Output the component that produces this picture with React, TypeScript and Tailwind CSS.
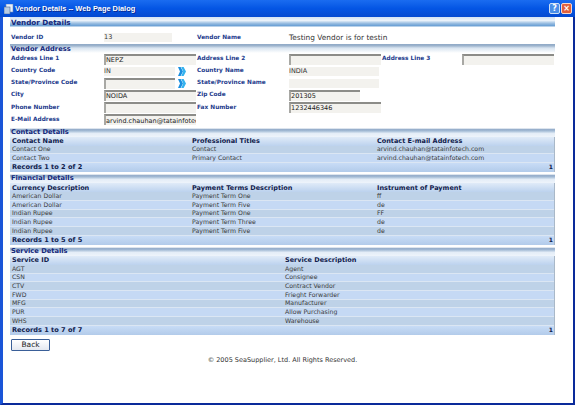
const font = { fontFamily: '"DejaVu Sans", Verdana, sans-serif' };

function SectionBar({ title, kind }: { title: string; kind: "main" | "plain" | "table" }) {
  if (kind === "main") {
    return (
      <div className="h-[10px] bg-[linear-gradient(to_bottom,#d3e2f3_0%,#eaf2fa_35%,#9dc0e2_62%,#6fa3d6_85%,#dce8f4_100%)] text-[7.2px] font-bold text-[#14277a] leading-[11px]">
        <span className="pl-[1px]">{title}</span>
      </div>
    );
  }
  return (
    <div
      className={`h-[9px] text-[6.7px] font-bold text-[#14277a] ${kind === "plain" ? "leading-[10px] bg-[linear-gradient(to_bottom,#8ea8c6_0%,#9db4cd_20%,#d8e4f0_45%,#ffffff_100%)]" : "leading-[9px] bg-[linear-gradient(to_bottom,#ffffff_0%,#90a9c8_18%,#a8bfd8_34%,#e4edf7_60%,#eef4fb_100%)]"}`}
    >
      <span className="pl-[1px]">{title}</span>
    </div>
  );
}

function Label({ text }: { text: string }) {
  return <div className="text-[5.8px] font-bold text-[#1c3a8c] leading-none pl-[1px]">{text}</div>;
}

function Input({ value, w }: { value?: string; w: string }) {
  return (
    <input
      readOnly
      value={value ?? ""}
      className={`h-[11px] bg-[#f3f2ee] border-t-2 border-l-2 border-t-[#8c8c88] border-l-[#a8a8a4] text-[6.5px] leading-[9px] text-[#222] outline-none px-0 ${w}`}
    />
  );
}

function Flat({ value, w }: { value?: string; w: string }) {
  return (
    <div className={`h-[9px] bg-[#f3f2ee] text-[6.5px] leading-[9px] text-[#333] ${w}`}>{value}</div>
  );
}

function Arrow() {
  return (
    <svg width="8" height="9" viewBox="0 0 8 9" className="ml-[3px]">
      <path d="M0 0 L2.6 0 L5 4.5 L2.6 9 L0 9 L2 4.5Z" fill="#1a8fe0" />
      <path d="M3.2 0 L5.6 0 L8 4.5 L5.6 9 L3.2 9 L5.2 4.5Z" fill="#34b2ee" />
    </svg>
  );
}

function DataTable({
  columns,
  rows,
  total,
}: {
  columns: { name: string; width: string }[];
  rows: string[][];
  total: number;
}) {
  return (
    <div className="bg-[#dce8f4] border-r border-[#a9b8c8]">
      <div className="flex h-[9px] bg-gradient-to-b from-[#e0ebf8] to-[#bcd2ee] items-center text-[6.5px] font-bold text-[#10204c] leading-none">
        {columns.map((c) => (
          <div key={c.name} className={`pl-[2px] ${c.width}`}>
            {c.name}
          </div>
        ))}
      </div>
      {rows.map((r, i) => (
        <div
          key={i}
          className={`flex h-[8.65px] items-center text-[6.2px] text-[#3a3a3a] leading-none border-b border-[#dbe6f3] ${i % 2 === 0 ? "bg-[#bed2e8]" : "bg-[#c5d9f4]"}`}
        >
          {r.map((cell, j) => (
            <div key={j} className={`pl-[2px] ${columns[j].width}`}>
              {cell}
            </div>
          ))}
        </div>
      ))}
      <div className="flex h-[9px] justify-between items-center bg-gradient-to-b from-[#c8dcf6] to-[#b2cbea] text-[6.6px] font-bold text-[#10204c] leading-none pl-[2px] pr-[1px]">
        <span>
          Records 1 to {total} of {total}
        </span>
        <span className="text-[6px]">1</span>
      </div>
    </div>
  );
}

const threeCols = ["w-[180px]", "w-[185px]", "flex-1"];

export default function App() {
  const col = (names: string[]) => names.map((name, i) => ({ name, width: threeCols[i] }));

  return (
    <div className="w-[575px] h-[405px] flex flex-col bg-[#0a3fc8] overflow-hidden" style={font}>
      {/* title bar */}
      <div className="h-[17px] shrink-0 flex items-center bg-gradient-to-b from-[#1a6cf0] via-[#0455e4] to-[#0349d0] pl-[4px] pr-[3px]">
        <svg width="10" height="10" viewBox="0 0 10 10">
          <rect x="2" y="0" width="7" height="8" fill="#e8f0fa" stroke="#6a88b8" strokeWidth="0.6" />
          <rect x="0" y="3" width="6" height="7" fill="#b8cce4" stroke="#4a6898" strokeWidth="0.6" />
        </svg>
        <span
          className="ml-[1px] text-[7.4px] font-bold text-white leading-none [text-shadow:1px_1px_0_#0a2a90]"
          style={{ fontFamily: '"Liberation Sans", sans-serif' }}
        >
          Vendor Details -- Web Page Dialog
        </span>
        <div className="ml-auto flex gap-[1px]">
          <div className="w-[11px] h-[11px] rounded-[2px] bg-[#4a8ee8] border border-[#cfe0f6] text-white text-[8px] leading-[9px] font-bold text-center">
            ?
          </div>
          <div className="w-[11px] h-[11px] rounded-[2px] bg-[#e0603c] border border-[#f6d8cc] text-white text-[8px] leading-[9px] font-bold text-center">
            ×
          </div>
        </div>
      </div>

      {/* dialog body */}
      <div className="flex-1 flex border-l-[3px] border-l-[#1a55d8] border-r-[2px] border-r-[#0a2a9a] border-b-[2px] border-b-[#0a2a9a]">
        <div className="flex-1 bg-white pl-[7px] pr-[18px] flex flex-col">
          <SectionBar title="Vendor Details" kind="main" />

          <div className="flex h-[17px] items-center pt-[4px]">
            <div className="w-[94px]">
              <Label text="Vendor ID" />
            </div>
            <div className="w-[92px]">
              <Flat value="13" w="w-[68px]" />
            </div>
            <div className="w-[93px]">
              <Label text="Vendor Name" />
            </div>
            <div className="text-[7.4px] text-[#333] leading-none">Testing Vendor is for testin</div>
          </div>

          <SectionBar title="Vendor Address" kind="plain" />

          <div className="grid grid-cols-[94px_92px_93px_92px_81px_1fr] auto-rows-[12.1px] items-center mb-[2px]">
            <Label text="Address Line 1" />
            <Input value="NEPZ" w="w-[92px]" />
            <Label text="Address Line 2" />
            <Input w="w-[92px]" />
            <Label text="Address Line 3" />
            <Input w="w-[92px]" />

            <Label text="Country Code" />
            <div className="flex items-center">
              <Flat value="IN" w="w-[71px]" />
              <Arrow />
            </div>
            <Label text="Country Name" />
            <Flat value="INDIA" w="w-[90px]" />
            <div />
            <div />

            <Label text="State/Province Code" />
            <div className="flex items-center">
              <Input w="w-[71px]" />
              <Arrow />
            </div>
            <Label text="State/Province Name" />
            <Flat w="w-[90px]" />
            <div />
            <div />

            <Label text="City" />
            <Input value="NOIDA" w="w-[92px]" />
            <Label text="Zip Code" />
            <Input value="201305" w="w-[71px]" />
            <div />
            <div />

            <Label text="Phone Number" />
            <Input w="w-[92px]" />
            <Label text="Fax Number" />
            <Input value="1232446346" w="w-[92px]" />
            <div />
            <div />

            <Label text="E-Mail Address" />
            <Input value="arvind.chauhan@tatainfotech.com" w="w-[92px]" />
          </div>

          <SectionBar title="Contact Details" kind="table" />
          <DataTable
            columns={col(["Contact Name", "Professional Titles", "Contact E-mail Address"])}
            rows={[
              ["Contact One", "Contact", "arvind.chauhan@tatainfotech.com"],
              ["Contact Two", "Primary Contact", "arvind.chauhan@tatainfotech.com"],
            ]}
            total={2}
          />

          <div className="h-[2.5px]" />
          <SectionBar title="Financial Details" kind="table" />
          <DataTable
            columns={col(["Currency Description", "Payment Terms Description", "Instrument of Payment"])}
            rows={[
              ["American Dollar", "Payment Term One", "ff"],
              ["American Dollar", "Payment Term Five", "de"],
              ["Indian Rupee", "Payment Term One", "FF"],
              ["Indian Rupee", "Payment Term Three", "de"],
              ["Indian Rupee", "Payment Term Five", "de"],
            ]}
            total={5}
          />

          <div className="h-[2.5px]" />
          <SectionBar title="Service Details" kind="table" />
          <DataTable
            columns={[
              { name: "Service ID", width: "w-[273px]" },
              { name: "Service Description", width: "flex-1" },
            ]}
            rows={[
              ["AGT", "Agent"],
              ["CSN", "Consignee"],
              ["CTV", "Contract Vendor"],
              ["FWD", "Frieght Forwarder"],
              ["MFG", "Manufacturer"],
              ["PUR", "Allow Purchasing"],
              ["WHS", "Warehouse"],
            ]}
            total={7}
          />

          <button className="mt-[4.5px] ml-[1px] w-[39px] h-[12px] self-start bg-gradient-to-b from-white to-[#e4e8f0] border border-[#3a5f98] rounded-[1px] text-[7.5px] text-[#222] leading-none">
            Back
          </button>
          <div className="mt-[6px] text-center text-[6.5px] text-[#333] leading-none">
            © 2005 SeaSupplier, Ltd. All Rights Reserved.
          </div>
        </div>
      </div>
    </div>
  );
}
